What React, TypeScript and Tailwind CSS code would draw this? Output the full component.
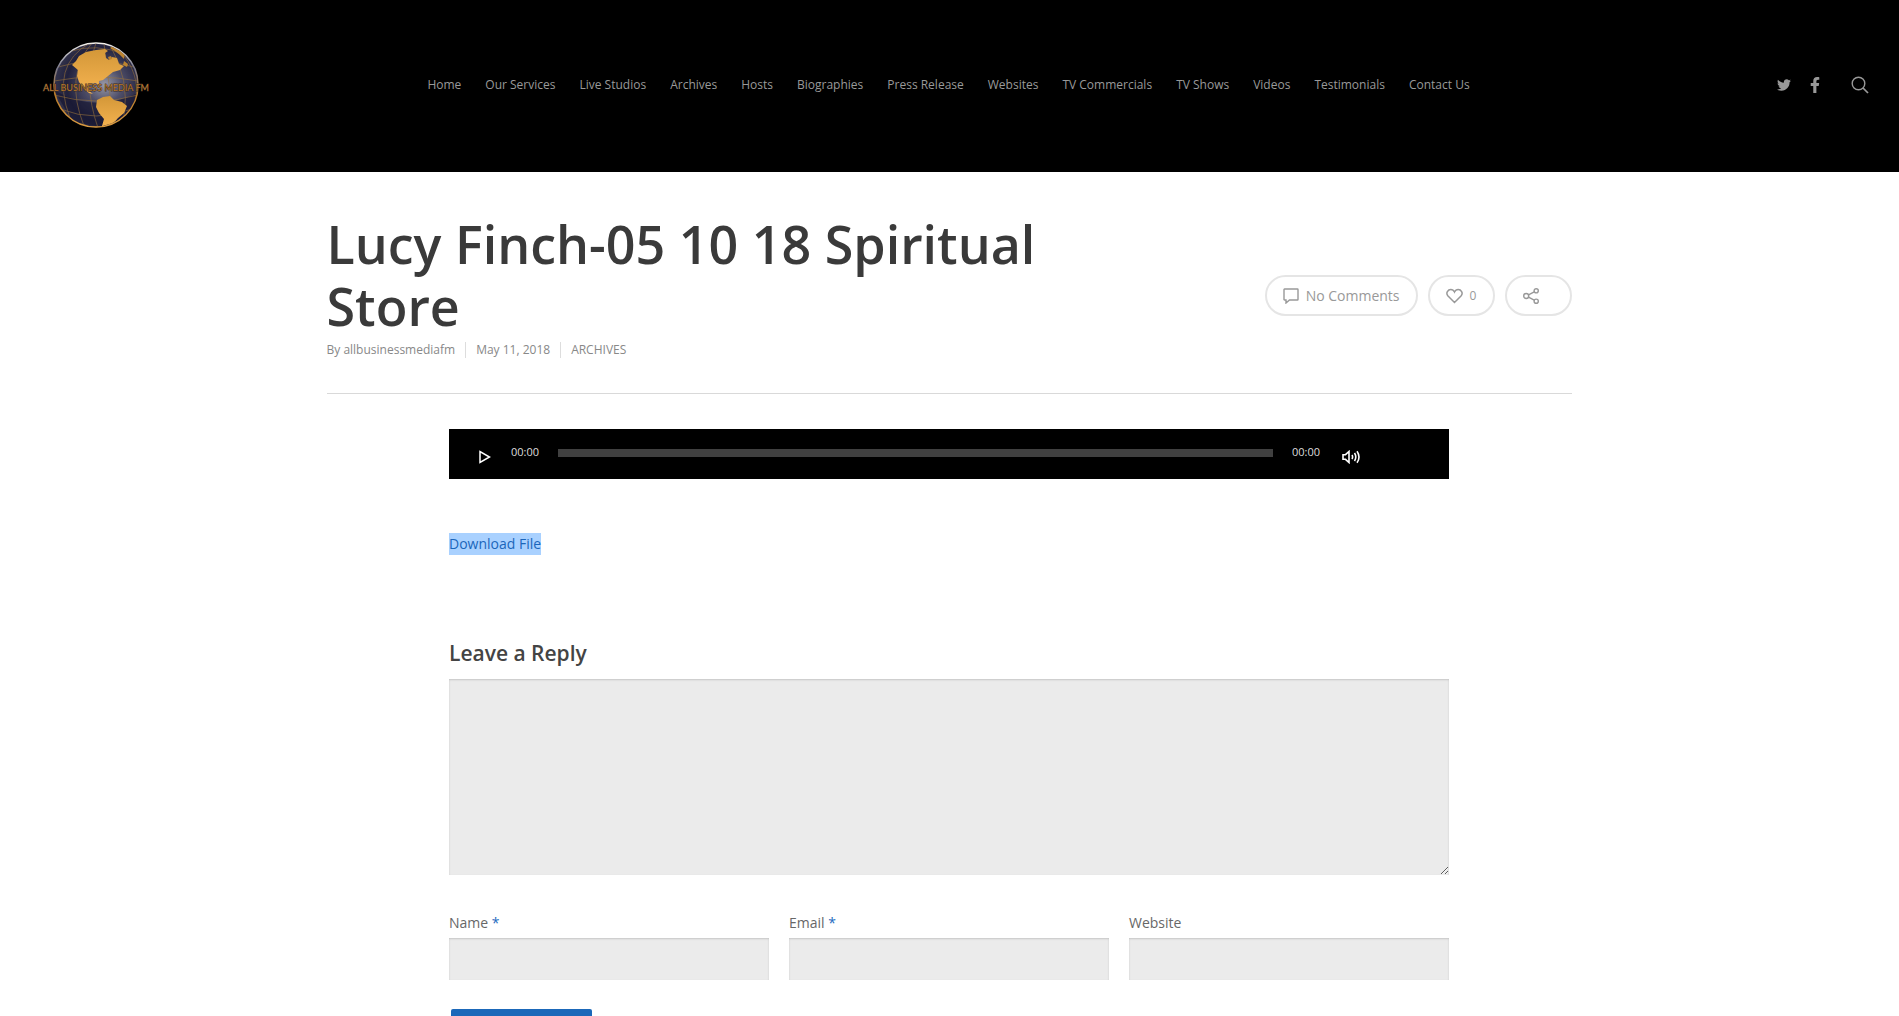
import { FaFacebookF, FaTwitter } from 'react-icons/fa';

const NAV_ITEMS = [
  'Home',
  'Our Services',
  'Live Studios',
  'Archives',
  'Hosts',
  'Biographies',
  'Press Release',
  'Websites',
  'TV Commercials',
  'TV Shows',
  'Videos',
  'Testimonials',
  'Contact Us',
];

const FIELDS = [
  { id: 'author', label: 'Name', type: 'text', required: true },
  { id: 'email', label: 'Email', type: 'email', required: true },
  { id: 'url', label: 'Website', type: 'url', required: false },
];

const FIELD_STYLE =
  'block w-full rounded-none bg-[#ebebeb] px-3 outline-none shadow-[inset_0_1px_2px_rgba(0,0,0,0.16)]';

function Logo() {
  return (
    <svg viewBox="0 0 108 90" className="h-[90px] w-[108px]" role="img" aria-label="All Business Media FM">
      <defs>
        <radialGradient id="sea" cx="0.6" cy="0.5" r="0.6">
          <stop offset="0" stopColor="#9a9aa8" />
          <stop offset="0.35" stopColor="#50506a" />
          <stop offset="0.75" stopColor="#22223e" />
          <stop offset="1" stopColor="#34344c" />
        </radialGradient>
        <linearGradient id="rim" x1="0" y1="0" x2="0" y2="1">
          <stop offset="0" stopColor="#f4f1ec" />
          <stop offset="0.3" stopColor="#77778a" />
          <stop offset="0.6" stopColor="#b57a2b" />
          <stop offset="1" stopColor="#d89a42" />
        </linearGradient>
        <linearGradient id="land" x1="0" y1="0" x2="0" y2="1">
          <stop offset="0" stopColor="#d39738" />
          <stop offset="1" stopColor="#f6b451" />
        </linearGradient>
        <clipPath id="globe">
          <circle cx="54" cy="45" r="41.5" />
        </clipPath>
      </defs>
      <circle cx="54" cy="45" r="42" fill="url(#sea)" stroke="url(#rim)" strokeWidth="1.6" />
      <g clipPath="url(#globe)">
        <path d="M12 50q40 24 84 3l-5 20-30 14-30-5Z" fill="#171733" opacity="0.65" />
        <g fill="none" stroke="#96713c" strokeWidth="0.7" opacity="0.85">
          <path d="M26 12Q54 2 84 15M16 27Q54 15 92 27M12 41Q54 33 96 41M12 55Q54 67 96 55M18 69Q54 83 90 69" />
          <path d="M48 3Q8 25 28 78M50 3Q22 36 42 86M54 3Q40 42 56 88M62 4Q68 45 70 84M68 5Q88 40 82 76M76 8Q100 35 93 62" />
        </g>
        <path
          d="M34 21l3-5 7-4 10-2 9-1 3 2-3 2 1 5 3 2 3-3 5 1 2 6 5 2-4 4-7 2-5 4-5 4-4 1 0 5-3-3-5 1-4 2 2 5 4 3-4-1-5-4-5-7-2-6 1-6-6-5Z"
          fill="url(#land)"
        />
        <path d="M68 8l5-3 5 3 5 4-1 7-4-4-5-4ZM82 21l4 3-1 3-4-2ZM66 17l3-1 1 3-3 1Z" fill="#bd842f" />
        <path d="M55 60l6-3 7-1 4 4 8 2 5 4-3 7-6 5-6 7-8 4-2-3 2-7-5-6-3-6Z" fill="url(#land)" />
      </g>
      <text
        x="54"
        y="51"
        textAnchor="middle"
        fontSize="9"
        fill="#b7792d"
        stroke="#3a2a20"
        strokeWidth="0.8"
        paintOrder="stroke"
        className="font-['Lato',sans-serif]"
      >
        ALL BUSINESS MEDIA FM
      </text>
    </svg>
  );
}

function Header() {
  return (
    <header className="grid h-[172px] grid-cols-[1fr_auto_1fr] items-center bg-black pr-[30px] pl-7 pb-[3px] text-[#999]">
      <a href="#" className="ml-[14px] justify-self-start">
        <Logo />
      </a>
      <nav className="flex gap-6 text-[12px] leading-[18px] whitespace-nowrap">
        {NAV_ITEMS.map((item) => (
          <a key={item} href="#">
            {item}
          </a>
        ))}
      </nav>
      <div className="flex items-center justify-self-end">
        <a href="#" aria-label="Twitter">
          <FaTwitter size={14} />
        </a>
        <a href="#" aria-label="Facebook" className="ml-4">
          <FaFacebookF size={16} />
        </a>
        <button type="button" aria-label="Search" className="ml-7">
          <svg viewBox="0 0 18 18" className="size-[18px]" fill="none" stroke="currentColor">
            <circle cx="7.5" cy="7.5" r="6.3" strokeWidth="1.4" />
            <path d="M12 12l5 5" strokeWidth="1.7" />
          </svg>
        </button>
      </div>
    </header>
  );
}

const PILL_STYLE =
  'flex h-[41px] items-center rounded-full border-2 border-[#e5e5e5] pl-4 text-[14px] leading-5 text-[#999]';

function PostActions() {
  return (
    <div className="mt-5 flex shrink-0 gap-[10px]">
      <a href="#respond" className={`${PILL_STYLE} gap-[7px] pr-4`}>
        <svg viewBox="0 0 16 16" className="size-4" fill="none" stroke="currentColor" strokeWidth="1.4">
          <path d="M1.5 1h13q.5 0 .5.5v10q0 .5-.5.5H6.5L3 15v-3H1.5Q1 12 1 11.5v-10Q1 1 1.5 1Z" />
        </svg>
        No Comments
      </a>
      <button type="button" aria-label="Love this" className={`${PILL_STYLE} w-[67px] gap-[7px]`}>
        <svg viewBox="0 0 17 16" className="h-4 w-[17px]" fill="none" stroke="currentColor" strokeWidth="1.5">
          <path d="M8.5 14.5L1.8 7.8C-.5 4.8 2 1.5 4.8 1.5c1.8 0 3 1 3.7 2.5.7-1.5 1.900-2.5 3.700-2.5 2.800 0 5.300 3.300 3 6.300Z" />
        </svg>
        <span className="text-[12px]">0</span>
      </button>
      <button type="button" aria-label="Share" className={`${PILL_STYLE} w-[67px]`}>
        <svg viewBox="0 0 16 16" className="size-4" fill="none" stroke="currentColor" strokeWidth="1.4">
          <circle cx="3.2" cy="8" r="2.5" />
          <circle cx="13.2" cy="2.8" r="2.1" />
          <circle cx="13.2" cy="13.2" r="2.1" />
          <path d="M5.5 6.900l5.700-3M5.500 9.100l5.700 3" />
        </svg>
      </button>
    </div>
  );
}

function PostHeader() {
  return (
    <div className="mx-auto flex max-w-[1245px] items-center justify-between border-b border-[#d9d9d9] pt-[41px] pb-[35px]">
      <div className="max-w-[760px]">
        <h1 className="text-[52px] leading-[62px] font-semibold text-[#3a3a3a]">Lucy Finch-05 10 18 Spiritual Store</h1>
        <div className="mt-[5px] flex text-[12px] leading-4 text-[#888]">
          <span className="border-r border-[#ddd] pr-[10px]">
            By <a href="#">allbusinessmediafm</a>
          </span>
          <span className="border-r border-[#ddd] px-[10px]">May 11, 2018</span>
          <a href="#" className="pl-[10px]">
            ARCHIVES
          </a>
        </div>
      </div>
      <PostActions />
    </div>
  );
}

function AudioPlayer() {
  return (
    <div className="flex h-[50px] items-center bg-black px-[30px] text-[11px] leading-4 text-[#ddd]">
      <button type="button" aria-label="Play" className="mt-[6px] text-white">
        <svg viewBox="0 0 12 14" className="h-[14px] w-3" fill="none" stroke="currentColor" strokeWidth="1.5">
          <path d="M1 1.5v11l9.500-5.500Z" />
        </svg>
      </button>
      <span className="mb-1 ml-5">00:00</span>
      <div className="mx-[19px] mb-[2px] h-2 flex-1 bg-[#404040]" />
      <span className="mb-1">00:00</span>
      <button type="button" aria-label="Mute" className="mt-[6px] mr-[58px] ml-[22px] text-white">
        <svg viewBox="0 0 19 14" className="h-[14px] w-[19px]" fill="none" stroke="currentColor" strokeWidth="1.6">
          <path d="M1 4.700h2.500L7 1.500v11L3.500 9.300H1ZM10 5q1.200 2 0 4M12.500 3q2.600 4 0 8M15 1.200q4 5.800 0 11.600" />
        </svg>
      </button>
    </div>
  );
}

function CommentForm() {
  return (
    <form id="respond" className="mt-[83px] pb-10" onSubmit={(e) => e.preventDefault()}>
      <h3 className="text-[21px] leading-[30px] font-semibold text-[#444]">Leave a Reply</h3>
      <textarea aria-label="Comment" className={`${FIELD_STYLE} mt-[11px] h-[196px] resize py-3`} />
      <div className="mt-[37px] grid grid-cols-3 gap-5">
        {FIELDS.map((field) => (
          <div key={field.id}>
            <label htmlFor={field.id} className="block text-[14px] leading-[22px] text-[#676767]">
              {field.label} {field.required && <span className="text-[#1e6bc0]">*</span>}
            </label>
            <input id={field.id} type={field.type} className={`${FIELD_STYLE} mt-1 h-[42px]`} />
          </div>
        ))}
      </div>
      <button
        type="submit"
        className="mt-[29px] ml-[2px] h-[48px] w-[141px] rounded-[2px] bg-[#1b68b9] text-[12px] text-white"
      >
        Submit Comment
      </button>
    </form>
  );
}

export default function App() {
  return (
    <div className="min-h-screen bg-white font-['Open_Sans',sans-serif]">
      <Header />
      <main className="pr-px">
        <PostHeader />
        <div className="mx-auto max-w-[1000px] pt-[35px]">
          <AudioPlayer />
          <p className="mt-[54px] text-[14px] leading-[22px]">
            <a href="#" className="inline-block bg-[#a9d1ff] text-[#1b66bb]">
              Download File
            </a>
          </p>
          <CommentForm />
        </div>
      </main>
    </div>
  );
}
